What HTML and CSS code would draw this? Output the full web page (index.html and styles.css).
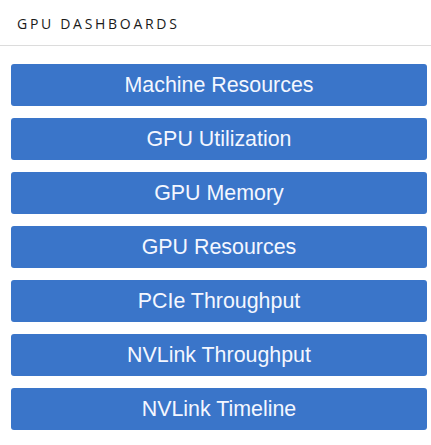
FILE: index.html
```html
<!DOCTYPE html>
<html>
<head>
<meta charset="utf-8">
<link rel="stylesheet" href="styles.css">
</head>
<body>
<div class="panel">
  <div class="header"><span class="title">GPU DASHBOARDS</span></div>
  <div class="list">
    <a class="btn">Machine Resources</a>
    <a class="btn">GPU Utilization</a>
    <a class="btn">GPU Memory</a>
    <a class="btn">GPU Resources</a>
    <a class="btn">PCIe Throughput</a>
    <a class="btn">NVLink Throughput</a>
    <a class="btn">NVLink Timeline</a>
  </div>
</div>
</body>
</html>
```
FILE: styles.css
```css
html, body {
  margin: 0;
  padding: 0;
  background: #ffffff;
}
.panel {
  width: 431px;
}
.header {
  height: 46px;
  box-sizing: border-box;
  border-bottom: 1px solid #dcdcdc;
  padding-left: 17px;
  display: flex;
  align-items: center;
}
.title {
  font-family: "Open Sans", sans-serif;
  font-size: 14px;
  letter-spacing: 2.7px;
  color: #1a1a1a;
  margin-top: 2px;
}
.list {
  display: flex;
  flex-direction: column;
  gap: 12px;
  padding: 18px 4px 0 11px;
}
.btn {
  display: flex;
  align-items: center;
  justify-content: center;
  height: 42px;
  background: #3a75c9;
  border-radius: 3px;
  color: #f4f7ff;
  font-family: "Liberation Sans", Arial, sans-serif;
  font-size: 21.4px;
  text-decoration: none;
}
```
